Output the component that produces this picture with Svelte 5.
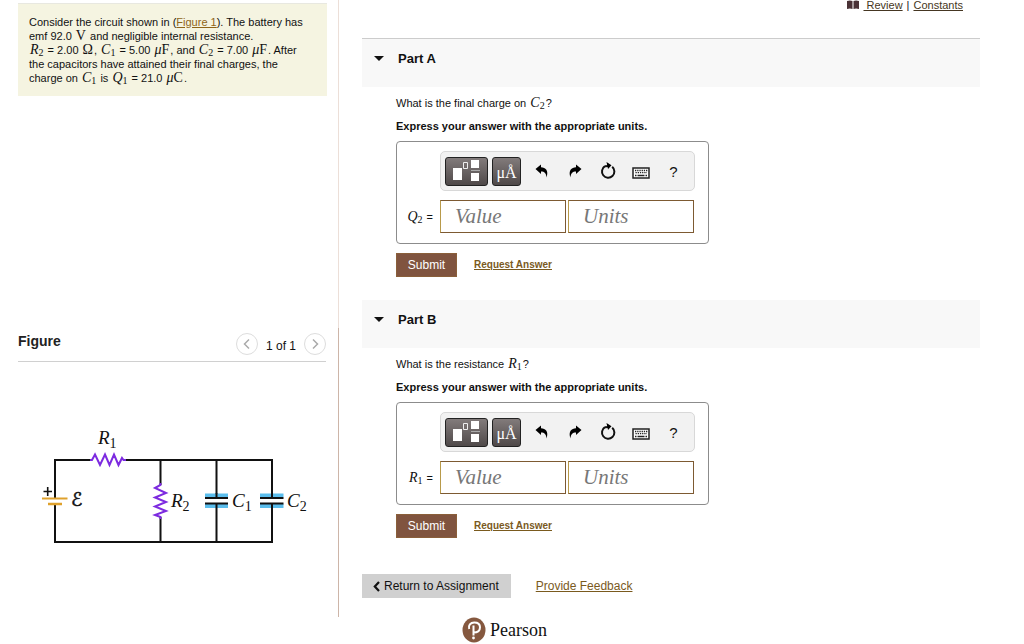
<script lang="ts">
    type Part = { id: string; title: string; prompt: string; asked: string; askedIndex: string; letter: string; index: string };

    const parts: Part[] = [
        { id: "a", title: "Part A", prompt: "What is the final charge on", asked: "C", askedIndex: "2", letter: "Q", index: "2" },
        { id: "b", title: "Part B", prompt: "What is the resistance", asked: "R", askedIndex: "1", letter: "R", index: "1" },
    ];

    let open = $state<Record<string, boolean>>({ a: true, b: true });
    let values = $state<Record<string, string>>({ a: "", b: "" });
    let units = $state<Record<string, string>>({ a: "", b: "" });
</script>

{#snippet sym(letter: string, index: string)}
    <span class="math"><i>{letter}</i><sub>{index}</sub></span>
{/snippet}

{#snippet micro(unit: string)}
    <span class="math"><i>μ</i>{unit}</span>
{/snippet}

<div class="page">
    <div class="columns">
        <aside class="side">
            <section class="problem-pane">
                <p class="problem">
                    Consider the circuit shown in (<a href="#figure">Figure 1</a>). The battery has emf 92.0 <span class="math">V</span> and negligible internal resistance.<br />
                    {@render sym("R", "2")} = 2.00 <span class="math">Ω</span>, {@render sym("C", "1")} = 5.00 {@render micro("F")}, and {@render sym("C", "2")} = 7.00 {@render micro("F")}. After the capacitors have attained their final charges, the charge on {@render sym("C", "1")} is {@render sym("Q", "1")} = 21.0 {@render micro("C")}.
                </p>
            </section>

            <section class="figure-pane" id="figure">
                <header class="figure-head">
                    <h2>Figure</h2>
                    <nav class="pager" aria-label="Figures">
                        <button type="button" aria-label="Previous figure">
                            <svg width="10" height="12" viewBox="0 0 10 12"><path d="M7 1.5 2.5 6 7 10.5" /></svg>
                        </button>
                        <span>1 of 1</span>
                        <button type="button" aria-label="Next figure">
                            <svg width="10" height="12" viewBox="0 0 10 12"><path d="M3 1.5 7.5 6 3 10.5" /></svg>
                        </button>
                    </nav>
                </header>

                <svg class="circuit" width="290" height="135" viewBox="0 0 290 135" role="img" aria-label="Circuit diagram">
                    <!-- wires -->
                    <g fill="none" stroke="#111" stroke-width="2">
                        <path d="M25 78V40H61M94 40H242V74M25 84V122H242V86" />
                        <path d="M130.500 40V65M130.500 97V122" />
                        <path d="M186.500 40V74M186.500 86V122" />
                    </g>
                    <!-- resistors -->
                    <g fill="none" stroke="#7d2be0" stroke-width="2" stroke-linejoin="miter">
                        <path d="M60 40H62L65 34.500 70 45 75 34.500 79.500 45 84 34.500 88.500 45 92 38 93.500 40H96" />
                        <path d="M130.500 63V65L125 68 136 73 125 77.500 136 82 125 86.500 136 91 125 95 130.500 97V99" />
                    </g>
                    <!-- battery -->
                    <path d="M12 78.500H37.500" stroke="#dfa12c" stroke-width="2" />
                    <path d="M18 84H32" stroke="#dfa12c" stroke-width="2.500" />
                    <path d="M13.500 71.500H22M17.700 67V76" stroke="#111" stroke-width="1.600" />
                    <!-- capacitors -->
                    <g fill="#5bbdec">
                        <path d="M175 73.500H198V77H175zM175 84H198V88H175zM230 73.500H253.500V77H230zM230 84H253.500V88H230z" />
                    </g>
                    <path d="M175 78H198M175 83.500H198M230 78H253.500M230 83.500H253.500" stroke="#111" stroke-width="2" />
                    <path d="M186.500 73V78M186.500 84V88M242 73V78M242 84V88" stroke="#111" stroke-width="2" />
                    <g class="circuit-labels">
                        <text x="68" y="24">R<tspan class="idx" dy="4">1</tspan></text>
                        <text x="141" y="87">R<tspan class="idx" dy="4">2</tspan></text>
                        <text x="202" y="87">C<tspan class="idx" dy="4">1</tspan></text>
                        <text x="257" y="87">C<tspan class="idx" dy="4">2</tspan></text>
                        <text class="emf" x="41" y="86">ℰ</text>
                    </g>
                </svg>
            </section>
        </aside>

        <main class="work">
            <div class="tools">
                <svg width="12" height="10" viewBox="0 0 12 10" aria-hidden="true">
                    <path d="M0 1Q3 0 5.500 1V9Q3 8 0 9zM6.500 1Q9 0 12 1V9Q9 8 6.500 9z" fill="#4a3236" />
                </svg>
                <a href="#review">&nbsp;Review</a><span>|</span><a href="#constants">Constants</a>
            </div>

            {#each parts as part (part.id)}
                <section class="part">
                    <h3 class="part-head">
                        <button type="button" aria-expanded={open[part.id]} onclick={() => (open[part.id] = !open[part.id])}>
                            <svg width="10" height="5" viewBox="0 0 10 5" aria-hidden="true"><path d="M0 0H10L5 5z" fill="#111" /></svg>
                            {part.title}
                        </button>
                    </h3>

                    {#if open[part.id]}
                        <form class="part-body" onsubmit={(e) => e.preventDefault()}>
                            <p class="prompt">{part.prompt} {@render sym(part.asked, part.askedIndex)}?</p>
                            <p class="instruction">Express your answer with the appropriate units.</p>

                            <div class="answer">
                                <div class="toolbar">
                                    <button type="button" class="dark wide" aria-label="Templates">
                                        <svg width="30" height="24" viewBox="0 0 30 24">
                                            <path d="M1 9H10V21H1zM19 1H27V9H19zM19 14H27V22H19z" fill="#fff" />
                                            <path d="M11.500 3.500H15.500V9.500H11.500z" fill="none" stroke="#eee" />
                                            <path d="M19 11.500H28" stroke="#aaa" stroke-width="1" />
                                        </svg>
                                    </button>
                                    <button type="button" class="dark" aria-label="Symbols">μÅ</button>
                                    <button type="button" class="tool" aria-label="Undo">
                                        <svg width="14" height="14" viewBox="0 0 14 14"><path d="M0.500 5 6 0.500V3.200C10.500 3.200 14 6.500 11.500 13.500 11.300 9.500 9.500 7.600 6 7.600V10z" /></svg>
                                    </button>
                                    <button type="button" class="tool" aria-label="Redo">
                                        <svg width="14" height="14" viewBox="0 0 14 14"><path d="M13.500 5 8 0.500V3.200C3.500 3.200 0 6.500 2.500 13.500 2.700 9.500 4.500 7.600 8 7.600V10z" /></svg>
                                    </button>
                                    <button type="button" class="tool" aria-label="Reset">
                                        <svg width="16" height="18" viewBox="0 0 16 18">
                                            <path d="M12.200 4.800A6.200 6.200 0 1 1 5 4.200" fill="none" stroke="#111" stroke-width="2" />
                                            <path d="M5 4.200 9 4" stroke="#111" stroke-width="2" />
                                            <path d="M6.500 0 11.500 3.300 8 7z" />
                                        </svg>
                                    </button>
                                    <button type="button" class="tool" aria-label="Keyboard">
                                        <svg class="keyboard" width="18" height="12" viewBox="0 0 18 12">
                                            <path d="M1 1H17V11H1z" fill="#fff" stroke="#222" stroke-width="1.500" />
                                            <path d="M3 3.500H15.500M3.500 5.700H15" fill="none" stroke="#222" stroke-width="1.300" stroke-dasharray="1.300 0.900" />
                                            <path d="M3 8.500H4.500M5.500 8.500H12.500M13.500 8.500H15" stroke="#222" stroke-width="1.300" />
                                        </svg>
                                    </button>
                                    <button type="button" class="tool help" aria-label="Help">?</button>
                                </div>
                                <label class="quantity" for="value-{part.id}">{@render sym(part.letter, part.index)} =</label>
                                <div class="fields">
                                    <input id="value-{part.id}" type="text" placeholder="Value" bind:value={values[part.id]} />
                                    <input type="text" aria-label="Units" placeholder="Units" bind:value={units[part.id]} />
                                </div>
                            </div>

                            <div class="actions">
                                <button type="submit" class="submit">Submit</button>
                                <a href="#answer-{part.id}">Request Answer</a>
                            </div>
                        </form>
                    {/if}
                </section>
            {/each}

            <div class="bottom">
                <button type="button" class="return">
                    <svg width="7" height="11" viewBox="0 0 7 11" aria-hidden="true"><path d="M6 1 1.800 5.500 6 10" fill="none" stroke="#111" stroke-width="2.200" /></svg>
                    Return to Assignment
                </button>
                <a href="#feedback">Provide Feedback</a>
            </div>
        </main>
    </div>

    <footer class="brand">
        <svg width="24" height="26" viewBox="0 0 24 26" aria-hidden="true">
            <ellipse cx="12" cy="13" rx="11.500" ry="12.500" fill="#85583f" />
            <path d="M7.200 12C6 8.500 8.500 5.500 12.200 5.500 15.800 5.500 18 7.500 18 10.300 18 13.500 15.500 15.600 11.500 15.600M11.500 8.500V18.500" fill="none" stroke="#fff" stroke-width="2" />
            <circle cx="11.500" cy="21" r="1.400" fill="#fff" />
        </svg>
        <span>Pearson</span>
    </footer>
</div>

<style>
    :global(body) {
        margin: 0;
        background: #fff;
    }
    .page {
        font-family: "Liberation Sans", Arial, sans-serif;
        font-size: 11px;
        line-height: 14px;
        color: #111;
        padding-right: 15px;
    }
    .page * { box-sizing: border-box; }
    p, h2, h3 { margin: 0; }
    button, input { font-family: inherit; margin: 0; }
    button { padding: 0; cursor: pointer; }
    a { color: #7a5a1e; }

    .math {
        margin: 0 1px;
        font-family: "Liberation Serif", "Times New Roman", serif;
        font-size: 14px;
        line-height: 12px;
        white-space: nowrap;
    }
    .math sub {
        font-size: 10px;
        line-height: 8px;
        vertical-align: -2px;
    }

    .columns {
        display: flex;
        min-height: 617px;
    }

    /* left column */
    .side {
        flex: 0 0 339px;
        display: flex;
        flex-direction: column;
    }
    .problem-pane {
        min-height: 328px;
        padding: 3px 11px 0 18px;
        border-right: 1px solid #ecdfd8;
    }
    .problem {
        padding: 11px 15px 11px 11px;
        border-top: 1px solid #e8e8e0;
        background: #f5f4e1;
    }
    .problem a { color: #8f6418; }
    .figure-pane {
        flex: 1;
        padding: 0 12px 0 18px;
        border-right: 1px solid #cdb5a8;
    }
    .figure-head {
        display: flex;
        justify-content: space-between;
        height: 34px;
        border-bottom: 1px solid #d0d0d0;
    }
    .figure-head h2 {
        font-size: 14px;
        line-height: 26px;
        color: #222;
    }
    .pager {
        display: flex;
        gap: 8px;
        padding-top: 5px;
        font-size: 12px;
        line-height: 26px;
    }
    .pager button {
        width: 22px;
        height: 22px;
        display: grid;
        place-items: center;
        border: 1px solid #ddd;
        border-radius: 50%;
        background: #fff;
    }
    .pager path {
        fill: none;
        stroke: #aaa;
        stroke-width: 1.5;
    }
    .circuit {
        display: block;
        margin: 58px 0 0 12px;
    }
    .circuit-labels {
        font-family: "Liberation Serif", "Times New Roman", serif;
        font-size: 19px;
        font-style: italic;
        fill: #111;
    }
    .idx {
        font-size: 14px;
        font-style: normal;
    }
    .emf {
        font-family: "DejaVu Sans", "DejaVu Serif", serif;
        font-size: 19px;
        font-style: normal;
        stroke: #111;
        stroke-width: 0.5;
    }

    /* right column */
    .work {
        flex: 1;
        padding: 0 29px 0 23px;
    }
    .tools {
        display: flex;
        justify-content: flex-end;
        align-items: flex-start;
        gap: 4px;
        height: 38px;
        padding-right: 17px;
        font-size: 11px;
        line-height: 10px;
    }
    .tools a { color: #453622; }
    .part { margin-bottom: 23px; }
    .part:first-of-type .part-head { border-top: 1px solid #ccc; }
    .part-head { background: #f8f8f8; }
    .part-head button {
        display: flex;
        align-items: center;
        gap: 14px;
        width: 100%;
        height: 48px;
        padding: 0 12px 9px;
        border: 0;
        background: none;
        font-size: 13px;
        font-weight: bold;
        color: #111;
    }
    .part-body { padding: 8px 0 0 34px; }
    .prompt { line-height: 16px; }
    .instruction {
        padding-top: 8px;
        line-height: 14px;
        font-weight: bold;
    }
    .answer {
        display: grid;
        grid-template-columns: 36px auto;
        column-gap: 7px;
        row-gap: 9px;
        align-items: center;
        width: fit-content;
        margin-top: 8px;
        padding: 9px 13px 10px 0;
        border: 1px solid #8c8c8c;
        border-radius: 4px;
    }
    .toolbar {
        grid-column: 2;
        display: flex;
        align-items: center;
        height: 40px;
        padding: 0 4px;
        border: 1px solid #d8d8d8;
        border-radius: 5px;
        background: #f2f2f2;
    }
    .dark {
        display: grid;
        place-items: center;
        width: 29px;
        height: 29px;
        margin-right: 4px;
        border: 1px solid #222;
        border-radius: 3px;
        background: linear-gradient(#827b7b, #4f4949);
        color: #fff;
        font-family: "Liberation Serif", "Times New Roman", serif;
        font-size: 16px;
        padding-top: 3px;
    }
    .dark.wide {
        width: 43px;
        padding-top: 0;
    }
    .tool {
        display: grid;
        place-items: center;
        width: 33px;
        height: 29px;
        border: 0;
        background: none;
    }
    .keyboard { margin-top: 4px; }
    .help {
        font-size: 15px;
        color: #111;
    }
    .quantity {
        text-align: right;
        white-space: nowrap;
    }
    .fields {
        display: flex;
        gap: 2px;
    }
    .fields input {
        width: 126px;
        height: 33px;
        padding: 0 14px;
        border: 1px solid #7d5a32;
        border-left-color: #b89a4a;
        border-radius: 0;
        background: #fff;
        font-family: "Liberation Serif", "Times New Roman", serif;
        font-size: 21px;
    }
    .fields input::placeholder {
        color: #777;
        font-style: italic;
    }
    .actions {
        display: flex;
        align-items: center;
        gap: 17px;
        margin-top: 9px;
    }
    .actions a {
        font-weight: bold;
        font-size: 10px;
    }
    .submit {
        width: 61px;
        height: 24px;
        border: 1px solid #8a5f3a;
        background: #80543f;
        color: #fff;
        font-size: 12px;
    }
    .bottom {
        display: flex;
        align-items: center;
        gap: 25px;
        padding-top: 13px;
        font-size: 12px;
    }
    .return {
        display: flex;
        align-items: center;
        gap: 4px;
        height: 24px;
        padding: 0 12px 0 11px;
        border: 0;
        background: #d0d0d0;
        color: #111;
        font-size: 12px;
    }
    .brand {
        display: flex;
        align-items: center;
        justify-content: center;
        gap: 4px;
        font-family: "Liberation Serif", Georgia, serif;
        font-size: 18px;
        line-height: 24px;
    }
</style>
